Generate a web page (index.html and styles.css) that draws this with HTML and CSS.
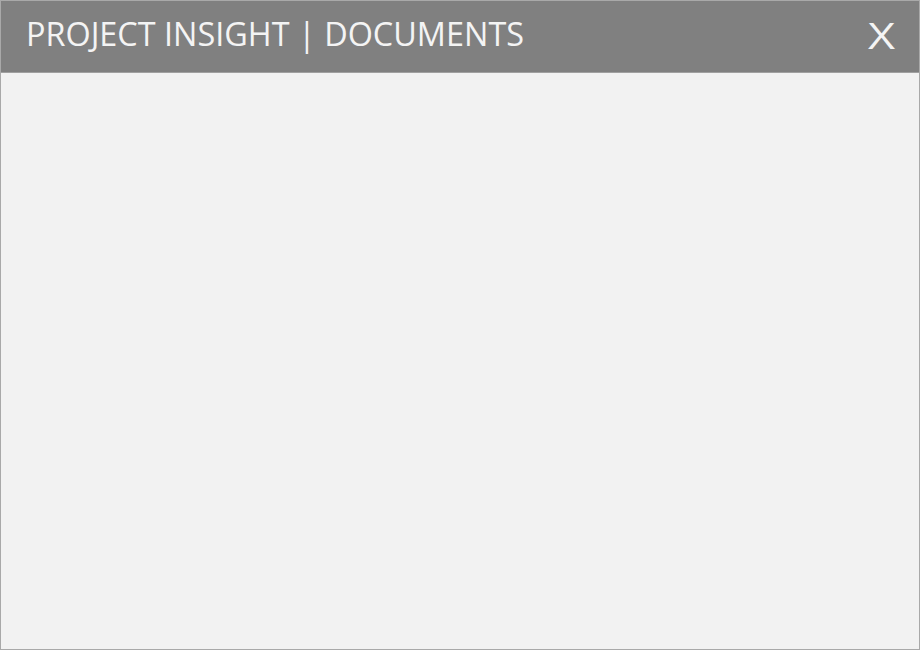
FILE: index.html
```html
<!DOCTYPE html>
<html>
<head>
<meta charset="utf-8">
<link rel="stylesheet" href="styles.css">
</head>
<body>
<div class="window">
  <header class="titlebar">
    <h1 class="title">PROJECT INSIGHT | DOCUMENTS</h1>
    <span class="close">X</span>
  </header>
  <main class="content"></main>
</div>
</body>
</html>
```
FILE: styles.css
```css
html, body {
  margin: 0;
  padding: 0;
  width: 920px;
  height: 650px;
  overflow: hidden;
  font-family: "Open Sans", "Liberation Sans", sans-serif;
}
.window {
  box-sizing: border-box;
  width: 920px;
  height: 650px;
  border: 1px solid #a9a9a9;
  display: flex;
  flex-direction: column;
  background: #f2f2f2;
}
.titlebar {
  height: 71px;
  background: #808080;
  border-bottom: 1px solid #a0a0a0;
  display: flex;
  align-items: center;
  justify-content: space-between;
  padding: 0 27px 0 25px;
  color: #f4f4f4;
}
.title {
  margin: 0 0 7px 0;
  font-weight: 400;
  font-size: 32.4px;
  letter-spacing: 0;
}
.close {
  font-size: 36px;
  margin-bottom: 2px;
  display: inline-block;
  transform: scaleX(1.3);
}
.content {
  flex: 1;
}
```
